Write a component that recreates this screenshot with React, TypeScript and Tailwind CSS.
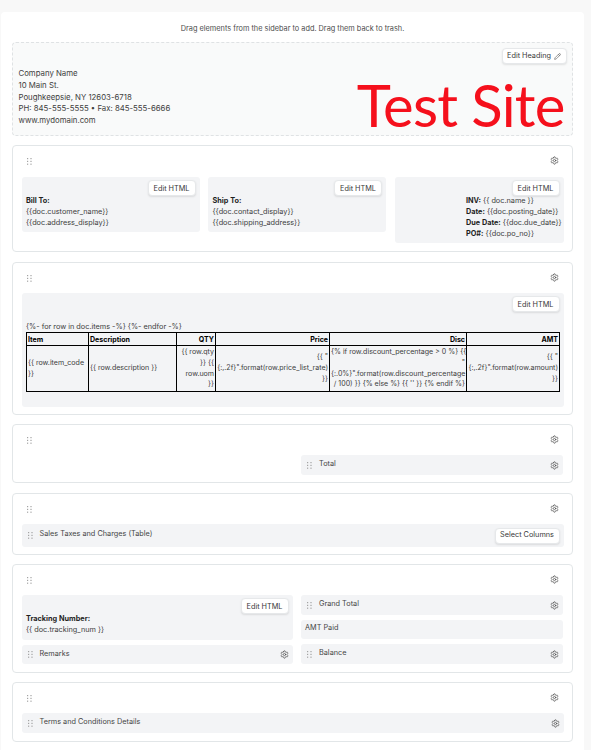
import { ReactNode } from 'react'
import { Pencil, Settings } from 'lucide-react'

function Grip() {
    return (
        <svg width="5" height="7" viewBox="0 0 5 7" className="shrink-0 fill-[#a3a3a3]">
            <rect x="0" y="0" width="1.2" height="1.2" />
            <rect x="3.4" y="0" width="1.2" height="1.2" />
            <rect x="0" y="2.8" width="1.2" height="1.2" />
            <rect x="3.4" y="2.8" width="1.2" height="1.2" />
            <rect x="0" y="5.6" width="1.2" height="1.2" />
            <rect x="3.4" y="5.6" width="1.2" height="1.2" />
        </svg>
    )
}

function Gear({ className = '' }: { className?: string }) {
    return <Settings className={`w-[9px] h-[9px] text-[#525252] shrink-0 ${className}`} strokeWidth={2} />
}

function Btn({ children, className = '' }: { children: ReactNode; className?: string }) {
    return (
        <div className={`h-[16px] flex items-center justify-center rounded-[4px] bg-white border border-[#e6e8ea] shadow-[0_1px_2px_rgba(0,0,0,0.1)] text-[7.3px] text-[#383838] ${className}`}>
            {children}
        </div>
    )
}

function Section({ children, className = '', head = 'h-[30px]' }: { children: ReactNode; className?: string; head?: string }) {
    return (
        <section className={`border border-[#e2e6e8] rounded-[4px] bg-white px-[8.5px] ${className}`}>
            <div className={`flex items-center justify-between pl-[5px] pr-[5px] ${head}`}>
                <Grip />
                <Gear className="-mt-[2px]" />
            </div>
            {children}
        </section>
    )
}

function Field({ label, className = 'h-[20px]' }: { label: string; className?: string }) {
    return (
        <div className={`flex items-center gap-[7px] rounded-[3px] bg-[#f3f4f6] pl-[6px] pr-[4px] text-[7.3px] text-[#454545] ${className}`}>
            <Grip />
            <span className="flex-1 pb-[1px]">{label}</span>
            <Gear />
        </div>
    )
}

function HtmlBox({ children, className = '' }: { children: ReactNode; className?: string }) {
    return (
        <div className={`rounded-[3px] bg-[#f3f4f6] pt-[3px] pr-[4px] pl-[4.5px] text-[7.3px] leading-[11px] text-[#404040] ${className}`}>
            <div className="flex justify-end">
                <Btn className="w-[48px]">Edit HTML</Btn>
            </div>
            <div className="-mt-[1.5px]">{children}</div>
        </div>
    )
}

const thClass = 'border border-black px-[1px] font-bold text-[7.05px] leading-[11px] h-[13px] text-black'
const tdClass = 'border border-black px-[1px] font-normal text-[7.05px] leading-[10.7px] text-[#404040] align-middle whitespace-nowrap'

export default function App() {
    return (
        <div className="h-[750px] overflow-hidden bg-[#f8f8f8] pt-[12px] pl-[1px] pr-[7px] font-['Inter',sans-serif]">
            <main className="rounded-t-[4px] bg-white px-[11px] h-[738px]">
                <p className="h-[30px] pt-[11px] text-center text-[7.35px] leading-[11px] text-[#4c4c4c]">
                    Drag elements from the sidebar to add. Drag them back to trash.
                </p>

                <div className="h-[94px] border border-dashed border-[#dfe2e4] rounded-[4px] bg-[#f9fafa] pt-[5px] pl-[5.5px] pr-[5.5px]">
                    <div className="flex justify-end">
                        <Btn className="w-[65px] gap-[3px]">
                            Edit Heading
                            <Pencil className="w-[7px] h-[7px] text-[#525252]" />
                        </Btn>
                    </div>
                    <div className="flex justify-between items-end">
                        <div className="pt-[4px] text-[7.8px] leading-[11.8px] text-[#404040]">
                            <div>Company Name</div>
                            <div>10 Main St.</div>
                            <div>Poughkeepsie, NY 12603-6718</div>
                            <div>PH: 845-555-5555 • Fax: 845-555-6666</div>
                            <div>www.mydomain.com</div>
                        </div>
                        <div className="font-['Lato',sans-serif] font-normal text-[58px] tracking-[-0.8px] leading-[60px] h-[60px] text-[#f5101c] whitespace-nowrap mr-[2px] -mb-[8.5px]">
                            Test Site
                        </div>
                    </div>
                </div>

                <Section className="mt-[9px] h-[107px]" head="h-[31px]">
                    <div className="grid grid-cols-[178px_178px_169px] gap-[8.5px] items-start">
                        <HtmlBox className="h-[55px]">
                            <b className="block text-[#1f1f1f]">Bill To:</b>
                            <div>{'{{doc.customer_name}}'}</div>
                            <div>{'{{doc.address_display}}'}</div>
                        </HtmlBox>
                        <HtmlBox className="h-[55px]">
                            <b className="block text-[#1f1f1f]">Ship To:</b>
                            <div>{'{{doc.contact_display}}'}</div>
                            <div>{'{{doc.shipping_address}}'}</div>
                        </HtmlBox>
                        <HtmlBox className="h-[66px]">
                            <div className="pl-[67px] whitespace-nowrap">
                                <div><b className="text-[#1f1f1f]">INV:</b> {'{{ doc.name }}'}</div>
                                <div><b className="text-[#1f1f1f]">Date:</b> {'{{doc.posting_date}}'}</div>
                                <div><b className="text-[#1f1f1f]">Due Date:</b> {'{{doc.due_date}}'}</div>
                                <div><b className="text-[#1f1f1f]">PO#:</b> {'{{doc.po_no}}'}</div>
                            </div>
                        </HtmlBox>
                    </div>
                </Section>

                <Section className="mt-[10px] h-[153px]">
                    <HtmlBox className="h-[114px]">
                        <div className="pt-[10.5px] h-[21.5px]">{'{%- for row in doc.items -%} {%- endfor -%}'}</div>
                        <table className="w-[533px] table-fixed border-collapse border-[1.5px] border-black">
                            <colgroup>
                                <col className="w-[62px]" />
                                <col className="w-[88px]" />
                                <col className="w-[39px]" />
                                <col className="w-[114px]" />
                                <col className="w-[137px]" />
                                <col className="w-[93px]" />
                            </colgroup>
                            <thead>
                                <tr>
                                    <th className={`${thClass} text-left`}>Item</th>
                                    <th className={`${thClass} text-left`}>Description</th>
                                    <th className={`${thClass} text-right`}>QTY</th>
                                    <th className={`${thClass} text-right`}>Price</th>
                                    <th className={`${thClass} text-right`}>Disc</th>
                                    <th className={`${thClass} text-right`}>AMT</th>
                                </tr>
                            </thead>
                            <tbody>
                                <tr className="h-[46px]">
                                    <td className={tdClass}>{'{{ row.item_code'}<br />{'}}'}</td>
                                    <td className={tdClass}>{'{{ row.description }}'}</td>
                                    <td className={`${tdClass} text-right`}>{'{{ row.qty'}<br />{'}} {{'}<br />row.uom<br />{'}}'}</td>
                                    <td className={`${tdClass} text-right`}>{'{{ "'}<br />{'{:,.2f}".format(row.price_list_rate)'}<br />{'}}'}</td>
                                    <td className={`${tdClass} text-right`}>{'{% if row.discount_percentage > 0 %} {{'}<br />"<br />{'{:.0%}".format(row.discount_percentage'}<br />{"/ 100) }} {% else %} {{ '' }} {% endif %}"}</td>
                                    <td className={`${tdClass} text-right`}>{'{{ "'}<br />{'{:,.2f}".format(row.amount)'}<br />{'}}'}</td>
                                </tr>
                            </tbody>
                        </table>
                    </HtmlBox>
                </Section>

                <Section className="mt-[9px] h-[59px]">
                    <div className="grid grid-cols-[271px_262px] gap-[8.5px]">
                        <div />
                        <Field label="Total" />
                    </div>
                </Section>

                <Section className="mt-[10px] h-[62px]">
                    <div className="h-[23px] flex items-center gap-[7px] rounded-[3px] bg-[#f3f4f6] pl-[6px] pr-[4px] text-[7.3px] text-[#454545]">
                        <Grip />
                        <span className="flex-1 pb-[3px]">Sales Taxes and Charges (Table)</span>
                        <Btn className="w-[65px]">Select Columns</Btn>
                    </div>
                </Section>

                <Section className="mt-[9px] h-[109px]">
                    <div className="grid grid-cols-[271px_262px] gap-[8.5px]">
                        <div className="flex flex-col gap-[5px]">
                            <HtmlBox className="h-[45px]">
                                <b className="block text-[#1f1f1f]">Tracking Number:</b>
                                <div>{'{{ doc.tracking_num }}'}</div>
                            </HtmlBox>
                            <Field label="Remarks" className="h-[19px]" />
                        </div>
                        <div className="flex flex-col gap-[5px]">
                            <Field label="Grand Total" />
                            <div className="h-[19px] flex items-center rounded-[3px] bg-[#f3f4f6] pl-[4px] pb-[2px] text-[7.3px] text-[#454545]">AMT Paid</div>
                            <Field label="Balance" />
                        </div>
                    </div>
                </Section>

                <Section className="mt-[9px] h-[60px]">
                    <Field label="Terms and Conditions Details" />
                </Section>
            </main>
        </div>
    )
}
